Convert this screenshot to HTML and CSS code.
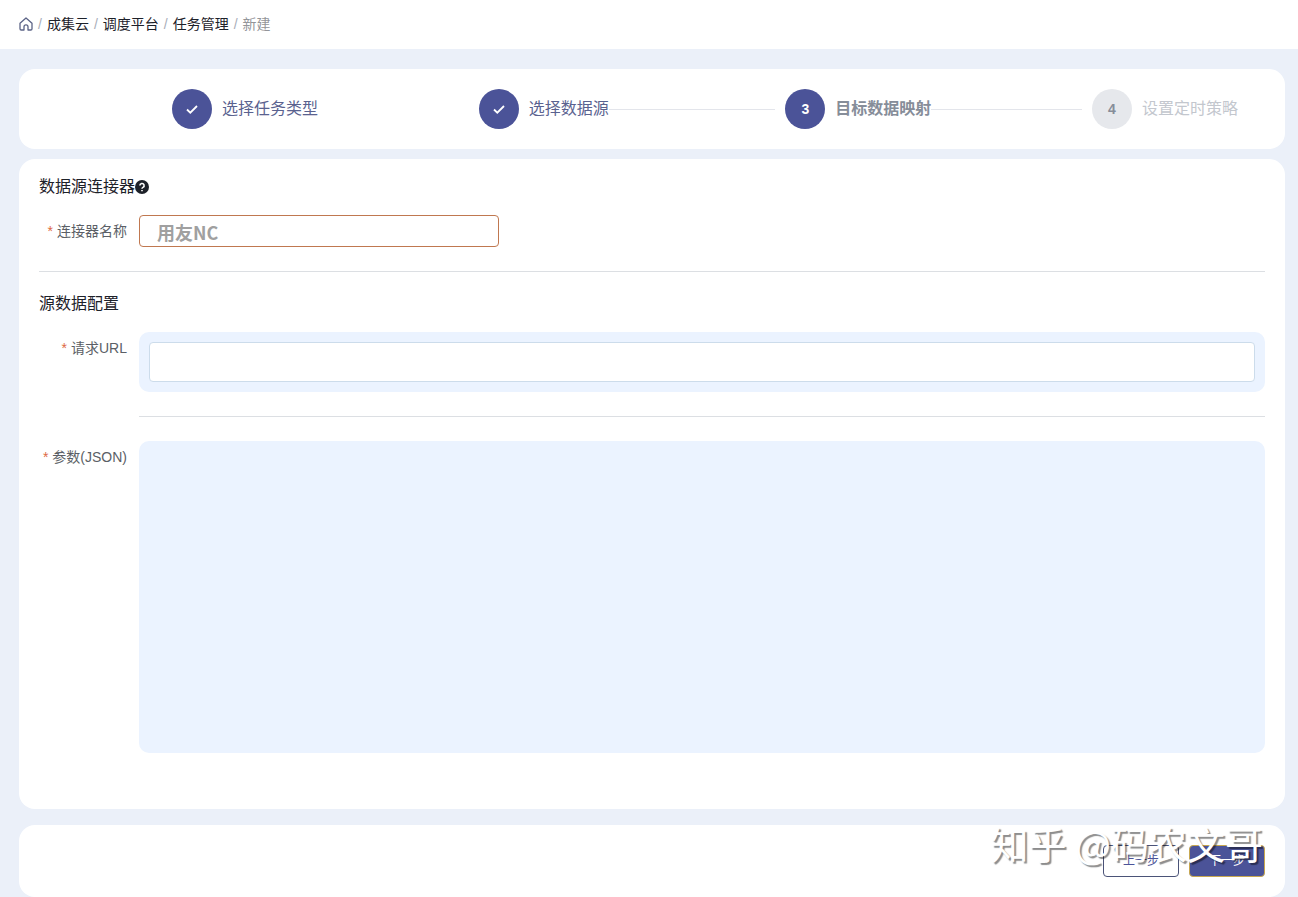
FILE: index.html
```html
<!DOCTYPE html>
<html lang="zh-CN">
<head>
<meta charset="utf-8">
<title>新建任务</title>
<link rel="stylesheet" href="styles.css">
</head>
<body>
<nav class="breadcrumb" aria-label="面包屑">
  <a class="home" href="#" aria-label="首页">
    <svg viewBox="0 0 14 14" width="14" height="14"><path d="M5 13H2.200a1.200 1.200 0 0 1-1.200-1.200V6.200L7 1l6 5.200v5.600a1.200 1.200 0 0 1-1.200 1.200H9V9.800a2 2 0 0 0-4 0z"/></svg>
  </a>
  <span class="sep">/</span><a href="#">成集云</a>
  <span class="sep">/</span><a href="#">调度平台</a>
  <span class="sep">/</span><a href="#">任务管理</a>
  <span class="sep">/</span><span class="current">新建</span>
</nav>

<main class="page">
  <ol class="card steps">
    <li class="step done no-tail">
      <span class="dot"><svg viewBox="0 0 14 14" width="14" height="14"><path d="M2 7.500 5.300 10.700 12 4"/></svg></span>
      <span class="title">选择任务类型</span>
    </li>
    <li class="step done">
      <span class="dot"><svg viewBox="0 0 14 14" width="14" height="14"><path d="M2 7.500 5.300 10.700 12 4"/></svg></span>
      <span class="title">选择数据源</span>
    </li>
    <li class="step active">
      <span class="dot">3</span>
      <span class="title">目标数据映射</span>
    </li>
    <li class="step wait">
      <span class="dot">4</span>
      <span class="title">设置定时策略</span>
    </li>
  </ol>

  <form class="card form" id="task">
    <section class="group">
      <h2 class="heading">数据源连接器<svg class="help" viewBox="0 0 14 14" width="14" height="14"><circle cx="7" cy="7" r="7"/><path d="M4.900 5.600a2.100 2.100 0 1 1 3.100 1.800c-.7.400-1 .6-1 1.300M7 9.900v1.400"/></svg></h2>
      <div class="row">
        <label class="label" for="connector">连接器名称</label>
        <input class="connector" id="connector" type="text" value="用友NC">
      </div>
    </section>
    <section class="group">
      <h2 class="heading">源数据配置</h2>
      <div class="row">
        <label class="label" for="url">请求URL</label>
        <div class="field">
          <div class="panel"><input class="url" id="url" type="text"></div>
        </div>
      </div>
      <div class="row">
        <label class="label" for="params">参数(JSON)</label>
        <textarea class="params" id="params"></textarea>
      </div>
    </section>
  </form>

  <footer class="card actions">
    <button class="btn" type="button">上一步</button>
    <button class="btn primary" type="submit" form="task">下一步</button>
    <span class="watermark">知乎 @码农文哥</span>
  </footer>
</main>
</body>
</html>
```
FILE: styles.css
```css
* { box-sizing: border-box; }

body {
  margin: 0;
  background: #ebf0f9;
  color: #1d2129;
  font: 14px/22px "Liberation Sans", "Noto Sans CJK SC", sans-serif;
}

a { color: inherit; text-decoration: none; }
input, textarea, button { font: inherit; color: inherit; }

.breadcrumb {
  display: flex;
  align-items: center;
  height: 49px;
  padding: 0 19px 2px;
  background: #fff;
}
.breadcrumb .sep { margin: 0 5px; color: #a9aeb8; }
.breadcrumb .current { color: #939599; }
.home { display: flex; }
.home svg { fill: none; stroke: #5b6386; stroke-width: 1.3; stroke-linejoin: round; }

.page { padding: 20px 13px 0 19px; }

.card { margin: 0; background: #fff; border-radius: 16px; }

.steps {
  display: flex;
  padding: 20px 47px 20px 153px;
  list-style: none;
  font-size: 16px;
  line-height: 24px;
}
.step { display: flex; flex: 1; align-items: center; color: #4b5398; }
.step:last-child { flex: none; }
.step:not(:last-child)::after {
  content: "";
  flex: 1;
  height: 1px;
  margin-right: 10px;
  background: #e3e5eb;
}
.step.no-tail::after { visibility: hidden; }
.dot {
  display: flex;
  align-items: center;
  justify-content: center;
  width: 40px;
  height: 40px;
  margin-right: 10px;
  border-radius: 50%;
  background: #4b5398;
  color: #fff;
  font-size: 14px;
  font-weight: bold;
}
.dot svg { fill: none; stroke: #fff; stroke-width: 1.800; }
.title { color: #5a628f; }
.active .title { color: #868d99; font-weight: bold; }
.wait .dot { background: #e6e8ec; color: #868d99; }
.wait .title { color: #c3c7ce; }

.form { margin-top: 10px; padding: 16px 20px 56px; }
.group + .group { margin-top: 24px; padding-top: 20px; border-top: 1px solid #dcdfe3; }
.heading {
  display: flex;
  align-items: center;
  margin: 0 0 16px;
  font-size: 16px;
  font-weight: normal;
  line-height: 24px;
}
.help { fill: #1d2129; }
.help path { fill: none; stroke: #fff; stroke-width: 1.600; }

.row { display: flex; align-items: flex-start; }
.row + .row { margin-top: 24px; }
.label {
  flex: none;
  width: 100px;
  padding-right: 12px;
  color: #5b5f66;
  line-height: 32px;
  text-align: right;
}
.label::before { content: "*"; margin-right: 4px; color: #dd6a45; }

.connector {
  width: 360px;
  height: 32px;
  padding: 2px 17px 0;
  border: 1px solid #c07850;
  border-radius: 4px;
  background: #fff;
  color: #a0a0a0;
  font-family: "Noto Sans CJK SC", sans-serif;
  font-size: 18px;
  font-weight: bold;
}
.field { flex: 1; padding-bottom: 24px; border-bottom: 1px solid #dcdfe3; }
.panel { padding: 10px; border-radius: 10px; background: #ebf3ff; }
.url {
  display: block;
  width: 100%;
  height: 40px;
  padding: 0 12px;
  border: 1px solid #ccdceb;
  border-radius: 4px;
  background: #fff;
}
.params {
  flex: 1;
  height: 312px;
  padding: 12px;
  border: 0;
  border-radius: 10px;
  background: #ebf3ff;
  resize: none;
}

.actions {
  position: relative;
  display: flex;
  justify-content: flex-end;
  gap: 10px;
  margin-top: 16px;
  padding: 20px;
}
.btn {
  width: 76px;
  height: 32px;
  padding: 0;
  border: 1px solid #4b5378;
  border-radius: 4px;
  background: #fff;
  color: #4b5398;
  font-size: 12px;
}
.btn.primary { border-color: #c8a850; background: #4b5398; color: #fff; }
.watermark {
  position: absolute;
  top: 0;
  right: 22px;
  color: #fff;
  font-family: "Noto Sans CJK SC", sans-serif;
  font-size: 38px;
  line-height: 36px;
  white-space: nowrap;
  text-shadow: 2px 2px 1px rgba(0, 0, 0, 0.45);
  pointer-events: none;
}
```
